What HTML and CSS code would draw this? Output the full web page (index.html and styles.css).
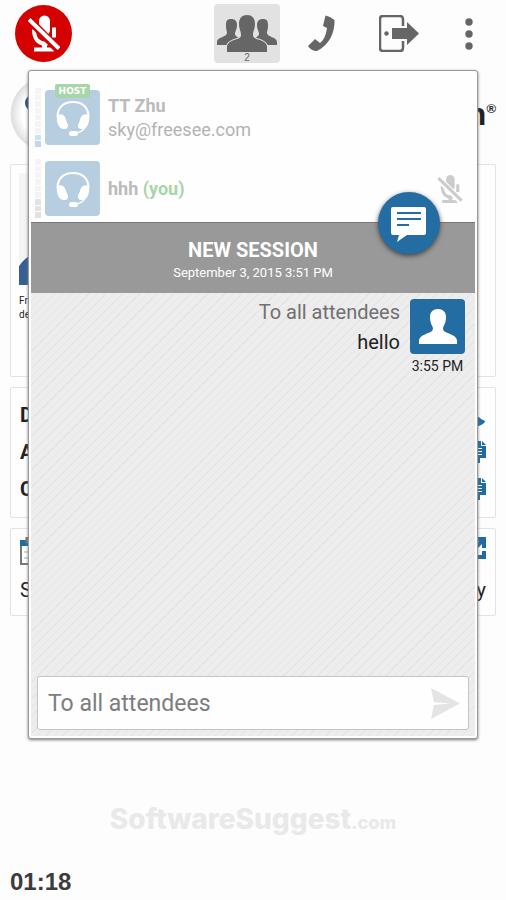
FILE: index.html
```html
<!DOCTYPE html>
<html lang="en">
<head>
<meta charset="utf-8">
<meta name="viewport" content="width=device-width, initial-scale=1">
<title>TT Zhu</title>
<link rel="stylesheet" href="styles.css">
</head>
<body>
<svg class="defs" width="0" height="0">
  <symbol id="mic-off" viewBox="0 0 32 36">
    <rect x="11" y="0" width="11" height="20" rx="5.5"/>
    <path d="M4 14h4c0 8 3 11 8 12 2 0 3 0 4-1l3 3c-1 1-3 2-4 2v2h7v4H6v-4h8v-2C7 28 4 22 4 14z"/>
    <path d="M24 12h4v10h-4z"/>
    <path class="slash" d="M2 5l27 28"/>
    <path class="bar" d="M1 4l30 29"/>
  </symbol>
  <symbol id="person" viewBox="0 0 38 35">
    <path d="M19 0c5 0 8 3 8 8 0 6-2 8-3 11 0 4 3 4 7 6 5 2 7 4 7 7v3H0v-3c0-3 2-5 7-7 4-2 7-2 7-6-1-3-3-5-3-11 0-5 3-8 8-8z"/>
  </symbol>
  <symbol id="headset" viewBox="0 0 34 36">
    <path d="M1.500 17C1.500 7 8 2 17 2s15.500 5 15.500 15" fill="none" stroke="currentColor" stroke-width="2.200"/>
    <path d="M1 15c5-2 8 0 9 5l2 5c0 3-1 4-4 4-5 0-8-6-7-14zM33 15c-5-2-8 0-9 5l-2 5c0 3 1 4 4 4 5 0 8-6 7-14z"/>
    <path d="M29 27c-1 3-4 5-9 6" fill="none" stroke="currentColor" stroke-width="1.500"/>
    <rect x="13" y="31" width="9" height="5" rx="2.500"/>
  </symbol>
  <symbol id="document" viewBox="0 0 16 22">
    <path d="M0 0h11v5h5v12h-6v5H0v-3h6v-3H0v-2h12v-1H0v-2h12v-1H0V8h12V7H0V4h7V3H0zM12 0l4 4h-4z"/>
  </symbol>
</svg>

<header class="topbar">
  <button class="mute" aria-label="Unmute"><svg width="32" height="37"><use href="#mic-off"/></svg></button>
  <nav class="tools">
    <button class="tool attendees" aria-label="Attendees">
      <svg width="60" height="37" viewBox="0 0 60 37">
        <path d="M14 4c4 0 6 2 6 6 0 5-2 6-2 9 0 2 3 3 4 4-4 2-8 2-10 7H0v-3c0-5 10-5 10-9 0-2-1-3-1-8 0-4 1-6 5-6zM46 4c-4 0-6 2-6 6 0 5 2 6 2 9 0 2-3 3-4 4 4 2 8 2 10 7h12v-3c0-5-10-5-10-9 0-2 1-3 1-8 0-4-1-6-5-6z"/>
        <path class="front" d="M30 0c5 0 8 3 8 9 0 5-2 7-2 11 0 3 3 4 7 5 5 2 7 4 7 7v5H10v-5c0-3 2-5 7-7 4-1 7-2 7-5 0-4-2-6-2-11 0-6 3-9 8-9z"/>
      </svg>
      <span>2</span>
    </button>
    <button class="tool" aria-label="Phone">
      <svg width="27" height="37" viewBox="0 0 27 37"><path d="M17.500 0.500Q22 1 26.500 5C27 18 21 30 9 36Q3 36 0 31l7-7 5 4c4-3 6-8 7-15l-4-2z"/></svg>
    </button>
    <button class="tool exit" aria-label="Leave">
      <svg width="41" height="37" viewBox="0 0 41 37"><path d="M24 11V4q0-3-3-3H4Q1 1 1 4v29q0 3 3 3h17q3 0 3-3v-7" fill="none" stroke="currentColor" stroke-width="2.500"/><circle cx="7.500" cy="18.500" r="2.200"/><path d="M13 13h15V7l12 11.500L28 30v-6H13z"/></svg>
    </button>
    <button class="tool" aria-label="More">
      <svg width="8" height="32" viewBox="0 0 8 32"><circle cx="4" cy="4" r="3.700"/><circle cx="4" cy="16" r="3.700"/><circle cx="4" cy="28" r="3.700"/></svg>
    </button>
  </nav>
</header>

<main class="stage">
  <div class="page">
    <div class="brand">
      <svg width="76" height="76" viewBox="0 0 76 76">
        <defs><radialGradient id="ball"><stop offset="0.700" stop-color="#fff"/><stop offset="1" stop-color="#dedede"/></radialGradient></defs>
        <circle cx="38" cy="38" r="37" fill="url(#ball)" stroke="#e2e2e2"/>
        <circle cx="24" cy="27" r="9" fill="#24508c"/>
      </svg>
      <b>n<sup>®</sup></b>
    </div>
    <section class="card intro">
      <div class="photo"></div>
      <p>Fre<br>de</p>
    </section>
    <section class="card details">
      <div class="row"><b>D</b><svg width="16" height="24" viewBox="0 0 16 24"><path d="M0 17q5 1 8-3 2 0 3 2l4 2q0 2-4 4-3 2-6 0H0z"/></svg></div>
      <div class="row"><b>A</b><svg width="16" height="22"><use href="#document"/></svg></div>
      <div class="row"><b>C</b><svg width="16" height="22"><use href="#document"/></svg></div>
    </section>
    <section class="card event">
      <div class="row">
        <svg width="28" height="28" viewBox="0 0 28 28"><path d="M1 4v23h26V4" fill="#fff" stroke="#777" stroke-width="2"/><path d="M0 3h28v6H0z"/><path d="M7 0v6M21 0v6" stroke="#777" stroke-width="3"/><path d="M4 15h20M4 21h20" stroke="#aaa"/></svg>
        <svg width="22" height="22" viewBox="0 0 22 22"><path d="M10 0h12v11h-4V7L8 17l-3-3L15 4h-5zM0 4h4v14h14v-4h4v8H0z"/></svg>
      </div>
      <div class="row"><span>S</span><span>y</span></div>
    </section>
  </div>

  <div class="panel">
    <ul class="people">
      <li>
        <i class="level speaking"><i></i><i></i><i></i><i></i><i></i><i></i><i></i><i></i><i></i></i>
        <div class="avatar"><svg width="34" height="36"><use href="#headset"/></svg><em class="host">HOST</em></div>
        <div class="who"><b>TT Zhu</b><span>sky@freesee.com</span></div>
      </li>
      <li>
        <i class="level silent"><i></i><i></i><i></i><i></i><i></i><i></i><i></i><i></i><i></i></i>
        <div class="avatar"><svg width="34" height="36"><use href="#headset"/></svg></div>
        <div class="who"><b>hhh <em>(you)</em></b></div>
        <svg class="muted" width="26" height="28"><use href="#mic-off"/></svg>
      </li>
    </ul>
    <section class="session">
      <h2>NEW SESSION</h2>
      <time>September 3, 2015 3:51 PM</time>
      <button class="chat-toggle" aria-label="Chat">
        <svg width="36" height="36" viewBox="0 0 36 36"><path d="M2 0h31q2 0 2 2v24q0 2-2 2H16L6 35l2-7H2q-2 0-2-2V2q0-2 2-2z"/><path d="M6 6h24M6 12h24M6 18h12" stroke="#236da3" stroke-width="2"/></svg>
      </button>
    </section>
    <section class="chat">
      <div class="message">
        <div class="body"><span>To all attendees</span><p>hello</p></div>
        <div class="sender"><div class="avatar self"><svg width="38" height="35"><use href="#person"/></svg></div><time>3:55 PM</time></div>
      </div>
      <form class="composer">
        <input type="text" placeholder="To all attendees" aria-label="To all attendees">
        <button type="button" aria-label="Send"><svg width="29" height="31" viewBox="0 0 29 31"><path d="M0 0l29 15.500L0 31l3-14 17-1.500L3 14z"/></svg></button>
      </form>
    </section>
  </div>
</main>

<footer>
  <div class="watermark">SoftwareSuggest<small>.com</small></div>
  <div class="timer">01:18</div>
</footer>
</body>
</html>
```
FILE: styles.css
```css
* { box-sizing: border-box; }
body { margin: 0; min-height: 100vh; display: flex; flex-direction: column; background: #fdfdfd; color: #222; font-family: Roboto, "Liberation Sans", sans-serif; }
button { border: 0; padding: 0; background: none; color: inherit; font: inherit; cursor: pointer; }
svg { display: block; fill: currentColor; flex: none; }
.defs { position: absolute; }
h2, p, ul { margin: 0; padding: 0; }
em { font-style: normal; }
.bar { stroke: currentColor; stroke-width: 4; }
.slash { stroke: var(--behind); stroke-width: 8; }

.topbar { height: 68px; padding: 4px 33px 0 15px; display: flex; justify-content: space-between; align-items: flex-start; }
.mute { --behind: #d50000; width: 57px; height: 57px; margin-top: 1px; border-radius: 50%; background: #d50000; color: #fff; display: grid; place-items: center; }
.tools { display: flex; align-items: center; color: #666; }
.tool { margin-left: 45px; }
.tool:nth-child(2) { margin-left: 28px; }
.tool:nth-child(3) { margin-left: 44px; }
.attendees { width: 66px; height: 59px; padding-top: 11px; border-radius: 4px; background: #e2e2e2; display: flex; flex-direction: column; align-items: center; font: 10px/12px "Liberation Sans", sans-serif; color: #666; }
.front { stroke: #e2e2e2; stroke-width: 2; paint-order: stroke; }

.stage { flex: 1; position: relative; }
.page { padding: 8px 10px 0; }
.brand { height: 88px; display: flex; justify-content: space-between; color: #222; }
.brand b { font: bold 32px/76px "Liberation Sans", sans-serif; }
.brand sup { font-size: 13px; line-height: 13px; }
.card { border: 1px solid #e2e2e2; border-radius: 2px; background: #fefefe; padding: 8px; margin-bottom: 10px; }
.intro { height: 213px; }
.photo { width: 90px; height: 112px; background: radial-gradient(circle at 29px 112px, #365f92 34px, #f4f4f4 35px); }
.intro p { margin-top: 9px; font-size: 10px; line-height: 14px; }
.row { display: flex; justify-content: space-between; align-items: center; padding: 0 1px; }
.row svg { color: #1f6ca5; }
.details { height: 131px; }
.details .row { height: 37px; font-size: 20px; }
.event { height: 88px; }
.event .row { height: 28px; font-size: 20px; align-items: flex-start; }
.event .row + .row { height: 50px; align-items: center; }

.panel { position: absolute; inset: 2px 28px 0; display: flex; flex-direction: column; padding: 2px; border: 1px solid #999; border-radius: 3px; background: #fefefe; box-shadow: 0 1px 3px #777; }
.people { list-style: none; display: grid; gap: 16px; padding: 17px 12px 6px 4px; --behind: #fefefe; }
.people li { display: flex; align-items: center; color: #bbb; }
.level { display: flex; flex-direction: column; gap: 1px; height: 59px; width: 6px; margin: -2px 4px -2px 0; }
.level i { flex: 1; background: #f4f4f4; }
.speaking i:nth-child(8) { background: #c3e8f5; }
.speaking i:nth-child(9) { background: #c5d2f0; }
.silent i:nth-child(n + 7) { background: #e2e2e2; }
.avatar { position: relative; width: 55px; height: 55px; border-radius: 4px; background: #b7cee1; color: #fff; display: grid; place-items: center; }
.host { position: absolute; top: -6px; left: 10px; width: 35px; height: 14px; border-radius: 2px; background: #a8d5a9; font: bold 9px/14px "DejaVu Sans", sans-serif; text-align: center; }
.who { flex: 1; margin-left: 8px; display: grid; font-size: 18px; line-height: 24px; }
.who em { color: #a8d5a9; }
.who span { color: #b3b3b3; }
.muted { color: #ccc; }

.session { position: relative; height: 71px; padding-top: 15px; border-top: 1px solid #777; background: #999; color: #fff; text-align: center; font-size: 13px; }
.session h2 { font-size: 20px; line-height: 25px; }
.session time { display: block; line-height: 20px; }
.chat-toggle { position: absolute; top: -31px; right: 35px; width: 62px; height: 62px; border-radius: 50%; background: #236da3; color: #fff; display: grid; place-items: center; padding-top: 4px; box-shadow: 0 2px 5px #444; }

.chat { flex: 1; display: flex; flex-direction: column; justify-content: space-between; padding: 6px; background: repeating-linear-gradient(135deg, #ededed 0 5px, #e5e5e5 5px 6px); }
.message { display: flex; justify-content: flex-end; gap: 10px; margin-right: 4px; }
.body { text-align: right; font-size: 20px; line-height: 30px; margin-top: -2px; }
.body span { color: #707070; }
.sender time { display: block; font-size: 14px; line-height: 24px; text-align: center; }
.self { background: #236da3; }
.composer { display: flex; align-items: center; height: 54px; padding: 0 8px 0 10px; border: 1px solid #c4c4c4; border-radius: 3px; background: #fefefe; color: #e4e4e4; }
.composer input { flex: 1; min-width: 0; border: 0; padding: 0; background: none; outline: 0; color: #222; font: 23px Roboto, sans-serif; }
.composer input::placeholder { color: #7d7d7d; opacity: 1; }

footer { height: 161px; padding: 62px 10px 0; }
.watermark { text-align: center; color: #e9e9e9; font: 800 28px/36px Inter, sans-serif; }
.watermark small { font-size: 18px; }
.timer { margin-top: 27px; font: bold 24px/28px "Liberation Sans", sans-serif; color: #3c3c3c; }
```
